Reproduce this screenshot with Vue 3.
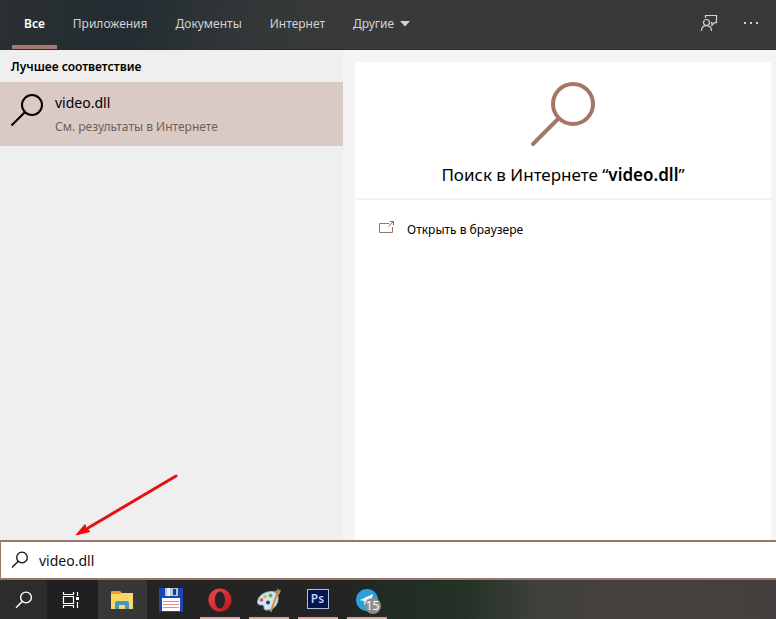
<script setup>
import { ref } from "vue";

const tabs = ["Все", "Приложения", "Документы", "Интернет"];
const activeTab = ref("Все");
const query = ref("video.dll");
</script>

<template>
  <div class="page">
    <header class="topbar">
      <nav class="tabs">
        <button
          v-for="tab in tabs"
          :key="tab"
          class="tab"
          :class="{ active: tab === activeTab }"
          @click="activeTab = tab"
        >
          {{ tab }}
        </button>
        <button class="tab">
          Другие
          <svg class="caret" width="10" height="6" viewBox="0 0 10 6">
            <path d="M0 0h10L5 5.5z" fill="currentColor" />
          </svg>
        </button>
      </nav>
      <div class="tools">
        <button class="tool" aria-label="Отзывы">
          <svg width="18" height="18" viewBox="0 0 18 18" fill="none" stroke="currentColor" stroke-width="1.2">
            <circle cx="6.5" cy="8.5" r="3" />
            <path d="M1.5 17c0-3.4 2-5.4 5-5.4s5 2 5 5.4" />
            <path d="M5.5 4V1.5h11v7.2h-2l-2.6 2.6V8.7H11" />
          </svg>
        </button>
        <button class="tool" aria-label="Параметры">
          <svg width="16" height="4" viewBox="0 0 16 4" fill="currentColor">
            <path d="M1 1h2v2H1zM7 1h2v2H7zM13 1h2v2h-2z" />
          </svg>
        </button>
      </div>
    </header>

    <main class="content">
      <section class="results">
        <h2>Лучшее соответствие</h2>
        <a class="result" href="#">
          <svg width="34" height="34" viewBox="0 0 34 34" fill="none" stroke="#000" stroke-width="2">
            <circle cx="22" cy="12" r="10" />
            <path d="M14.8 19.2L1.5 32.5" />
          </svg>
          <span class="result-text">
            <span class="result-title">{{ query }}</span>
            <span class="result-sub">См. результаты в Интернете</span>
          </span>
        </a>
        <svg class="pointer" width="104" height="64" viewBox="0 0 104 64">
          <path d="M101 3L13 55" stroke="#e81010" stroke-width="3" stroke-linecap="round" />
          <path d="M1 62L10 51.5L11 55L15 58.5z" fill="#f50a0a" stroke="#f50a0a" />
        </svg>
      </section>

      <section class="preview">
        <div class="card">
          <div class="card-head">
            <svg width="66" height="66" viewBox="0 0 66 66" fill="none" stroke="#a57567" stroke-width="4">
              <circle cx="43" cy="23" r="20" />
              <path d="M28.5 37.5L3 63" stroke-linecap="round" />
            </svg>
            <h1>Поиск в Интернете “<b>{{ query }}</b>”</h1>
          </div>
          <a class="action" href="#">
            <svg width="16" height="16" viewBox="0 0 16 16" fill="none" stroke="#9a7468">
              <path d="M10 2.5H0.5v9h13V6" />
              <path d="M9.5 5.5L14 1M11 0.5h3.5V4" stroke="#a8604f" />
            </svg>
            <span>Открыть в браузере</span>
          </a>
        </div>
      </section>
    </main>

    <label class="search">
      <svg width="18" height="18" viewBox="0 0 18 18" fill="none" stroke="#111" stroke-width="1.3">
        <circle cx="11" cy="6.5" r="5.3" />
        <path d="M7.2 10.3L1 16.5" />
      </svg>
      <input v-model="query" type="text" aria-label="Поиск" spellcheck="false" />
    </label>

    <footer class="taskbar">
      <button class="app find" aria-label="Поиск">
        <svg width="18" height="18" viewBox="0 0 18 18" fill="none" stroke="#fff" stroke-width="1.4">
          <circle cx="11" cy="6.5" r="5.4" />
          <path d="M7.2 10.4L1 16.8" />
        </svg>
      </button>
      <button class="app dark" aria-label="Представление задач">
        <svg width="18" height="18" viewBox="0 0 18 18" fill="none" stroke="#fff" stroke-width="1.2">
          <path d="M1.5 1v2.5h10V1M1.5 17v-2.5h10V17M1.5 5.5h10v7h-10zM15.5 1v4M15.5 11v6" />
          <path d="M14 6h3v3h-3z" fill="#fff" stroke="none" />
        </svg>
      </button>
      <button class="app light" aria-label="Проводник">
        <svg width="24" height="22" viewBox="0 0 24 22">
          <path d="M1 3q0-1 1-1h8l2 2h10q1 0 1 1v14H1z" fill="#e0a52c" />
          <path d="M1 5h9l2-1h10q1 0 1 1v15H1z" fill="#fbd768" />
          <path d="M5 20v-6q0-2 2-2h10q2 0 2 2v6h-4v-4H9v4z" fill="#4596c4" />
        </svg>
      </button>
      <button class="app" aria-label="Total Commander">
        <svg width="24" height="24" viewBox="0 0 24 24">
          <path d="M0 1q0-1 1-1h22q1 0 1 1v23H1l-1-1z" fill="#1c46b8" />
          <path d="M6 0h13v8H6z" fill="#b9c6d4" />
          <path d="M8 0h3v8H8z" fill="#e9eff4" />
          <path d="M14 1h3v6h-3z" fill="#17389b" />
          <path d="M3 10h18v13H3z" fill="#fff" />
          <path d="M4 13.5h16M4 16.5h16M4 19.5h16" stroke="#e58d8d" />
        </svg>
      </button>
      <button class="app running" aria-label="Opera">
        <svg width="24" height="24" viewBox="0 0 24 24">
          <defs>
            <linearGradient id="opera" x1="0" y1="0" x2="1" y2="1">
              <stop offset="0" stop-color="#f34848" />
              <stop offset="1" stop-color="#b5151d" />
            </linearGradient>
          </defs>
          <path
            d="M12 0.5a11.5 11.5 0 1 0 0 23a11.5 11.5 0 1 0 0-23zM12 3.5c3 0 5 3.8 5 8.5s-2 8.5-5 8.5-5-3.8-5-8.5 2-8.5 5-8.5z"
            fill="url(#opera)"
            fill-rule="evenodd"
          />
        </svg>
      </button>
      <button class="app running" aria-label="Paint">
        <svg width="26" height="26" viewBox="0 0 26 26">
          <path
            d="M12 5c6-2 11 1 10 8-1 6-5 10-11 10-3 0-3-1-3-3s-1-2-3-2c-3 0-4-2-3-5 1-4 5-7 10-8z"
            fill="#cfe6f1"
            stroke="#8fb8cd"
          />
          <circle cx="5.5" cy="13" r="1.8" fill="#d4564c" />
          <circle cx="9" cy="9.5" r="1.8" fill="#e5b341" />
          <circle cx="14.5" cy="8.500" r="2" fill="#6dae4d" />
          <circle cx="12" cy="15.5" r="2" fill="#24475f" />
          <path d="M21 7l-6 17" stroke="#d38b3c" stroke-width="2" stroke-linecap="round" />
          <path d="M20 8l-1-5 2 1 1-3 1 2h2l-2 5z" fill="#b98a58" />
        </svg>
      </button>
      <button class="app running" aria-label="Photoshop">
        <span class="ps">Ps</span>
      </button>
      <button class="app running" aria-label="Telegram">
        <span class="telegram">
          <svg width="22" height="22" viewBox="0 0 22 22">
            <circle cx="11" cy="11" r="11" fill="#2da0d8" />
            <path d="M4 11l13-6-3 12-4-3-2 2v-4z" fill="#fff" />
            <path d="M8 12l7-5-5 7-2 2z" fill="#c5deed" />
          </svg>
          <span class="badge">15</span>
        </span>
      </button>
    </footer>
  </div>
</template>

<style>
body {
  margin: 0;
}
</style>

<style scoped>
* {
  box-sizing: border-box;
}

.page {
  min-height: 100vh;
  display: flex;
  flex-direction: column;
  font-family: "Noto Sans", "Open Sans", sans-serif;
  font-size: 12px;
  color: #000;
  background: #f4f4f4;
}

button {
  border: none;
  background: none;
  padding: 0;
  font: inherit;
  color: inherit;
}

a {
  color: inherit;
  text-decoration: none;
}

svg {
  display: block;
  flex: none;
}

.topbar {
  height: 50px;
  display: flex;
  justify-content: space-between;
  background: linear-gradient(100deg, #2b3032 0%, #222c31 16%, #353839 34%, #3a3a3b 60%, #393939 100%);
  border-bottom: 1px solid #2c2c2c;
  color: #d2d4d4;
}

.tabs {
  display: flex;
  gap: 4px;
  padding-left: 12px;
}

.tab {
  display: flex;
  align-items: center;
  gap: 6px;
  padding: 2px 12px 0;
  border-bottom: 4px solid transparent;
}

.tab.active {
  color: #fff;
  font-weight: 600;
  border-bottom-color: #a57b70;
}

.tools {
  display: flex;
  align-items: center;
  gap: 24px;
  padding: 0 17px 4px 0;
}

.tool:first-child {
  padding-right: 1px;
}

.content {
  flex: 1;
  display: flex;
}

.results {
  position: relative;
  flex: 0 0 343px;
  background: #efefef;
}

h2 {
  margin: 0;
  padding: 7px 11px 5px;
  font-size: 12px;
  font-weight: 600;
  line-height: 20px;
}

.result {
  display: flex;
  align-items: center;
  gap: 11px;
  height: 64px;
  padding: 0 10px 8px;
  background: #d9cac5;
}

.result-text {
  display: flex;
  flex-direction: column;
  gap: 4px;
  padding-top: 10px;
  line-height: 20px;
}

.result-title {
  font-size: 14px;
}

.result-sub {
  color: #6b615e;
}

.pointer {
  position: absolute;
  left: 75px;
  bottom: 3px;
}

.preview {
  flex: 1;
  display: flex;
  padding: 12px 5px 0 12px;
}

.card {
  flex: 1;
  background: #fff;
}

.card-head {
  display: flex;
  flex-direction: column;
  align-items: center;
  gap: 14px;
  height: 138px;
  padding-top: 19px;
  border-bottom: 2px solid #f2f2f2;
}

h1 {
  margin: 0;
  font-size: 17px;
  font-weight: 400;
  line-height: 28px;
}

h1 b {
  font-weight: 600;
}

.action {
  display: flex;
  align-items: center;
  gap: 12px;
  padding: 16px 24px;
  line-height: 24px;
}

.action span {
  padding-top: 2px;
}

.search {
  display: flex;
  align-items: center;
  gap: 10px;
  height: 40px;
  padding-left: 10px;
  background: #fff;
  border: 2px solid #9a766b;
  border-width: 2px 0 2px 1px;
}

.search input {
  flex: 1;
  border: none;
  outline: none;
  padding: 0;
  background: none;
  font: inherit;
  font-size: 14px;
  color: #111;
}

.taskbar {
  display: flex;
  height: 39px;
  background: linear-gradient(90deg, #232323 0%, #242523 45%, #222d25 52%, #243226 60%, #3f403c 69%, #46413e 80%, #43403f 100%);
}

.app {
  position: relative;
  flex: 0 0 49px;
  display: flex;
  align-items: center;
  justify-content: center;
  padding-right: 2px;
}

.find {
  flex-basis: 47px;
  padding-right: 0;
  background: #2b2d2c;
}

.dark {
  flex-basis: 51px;
  padding-right: 4px;
  background: #202022;
}

.light {
  background: #373737;
}

.running::after {
  content: "";
  position: absolute;
  left: 4px;
  right: 5px;
  bottom: 0;
  height: 2px;
  background: #d0a79c;
}

.ps {
  width: 22px;
  height: 20px;
  margin-bottom: 2px;
  border: 1px solid #a9c3ea;
  background: #07134f;
  color: #b9d2f5;
  font-size: 12px;
  font-weight: 600;
  line-height: 18px;
  text-align: center;
}

.telegram {
  position: relative;
}

.badge {
  position: absolute;
  left: 9px;
  top: 9px;
  width: 16px;
  height: 16px;
  border-radius: 50%;
  background: #8b8d8f;
  color: #fff;
  font-size: 12px;
  line-height: 16px;
  text-align: center;
}
</style>
